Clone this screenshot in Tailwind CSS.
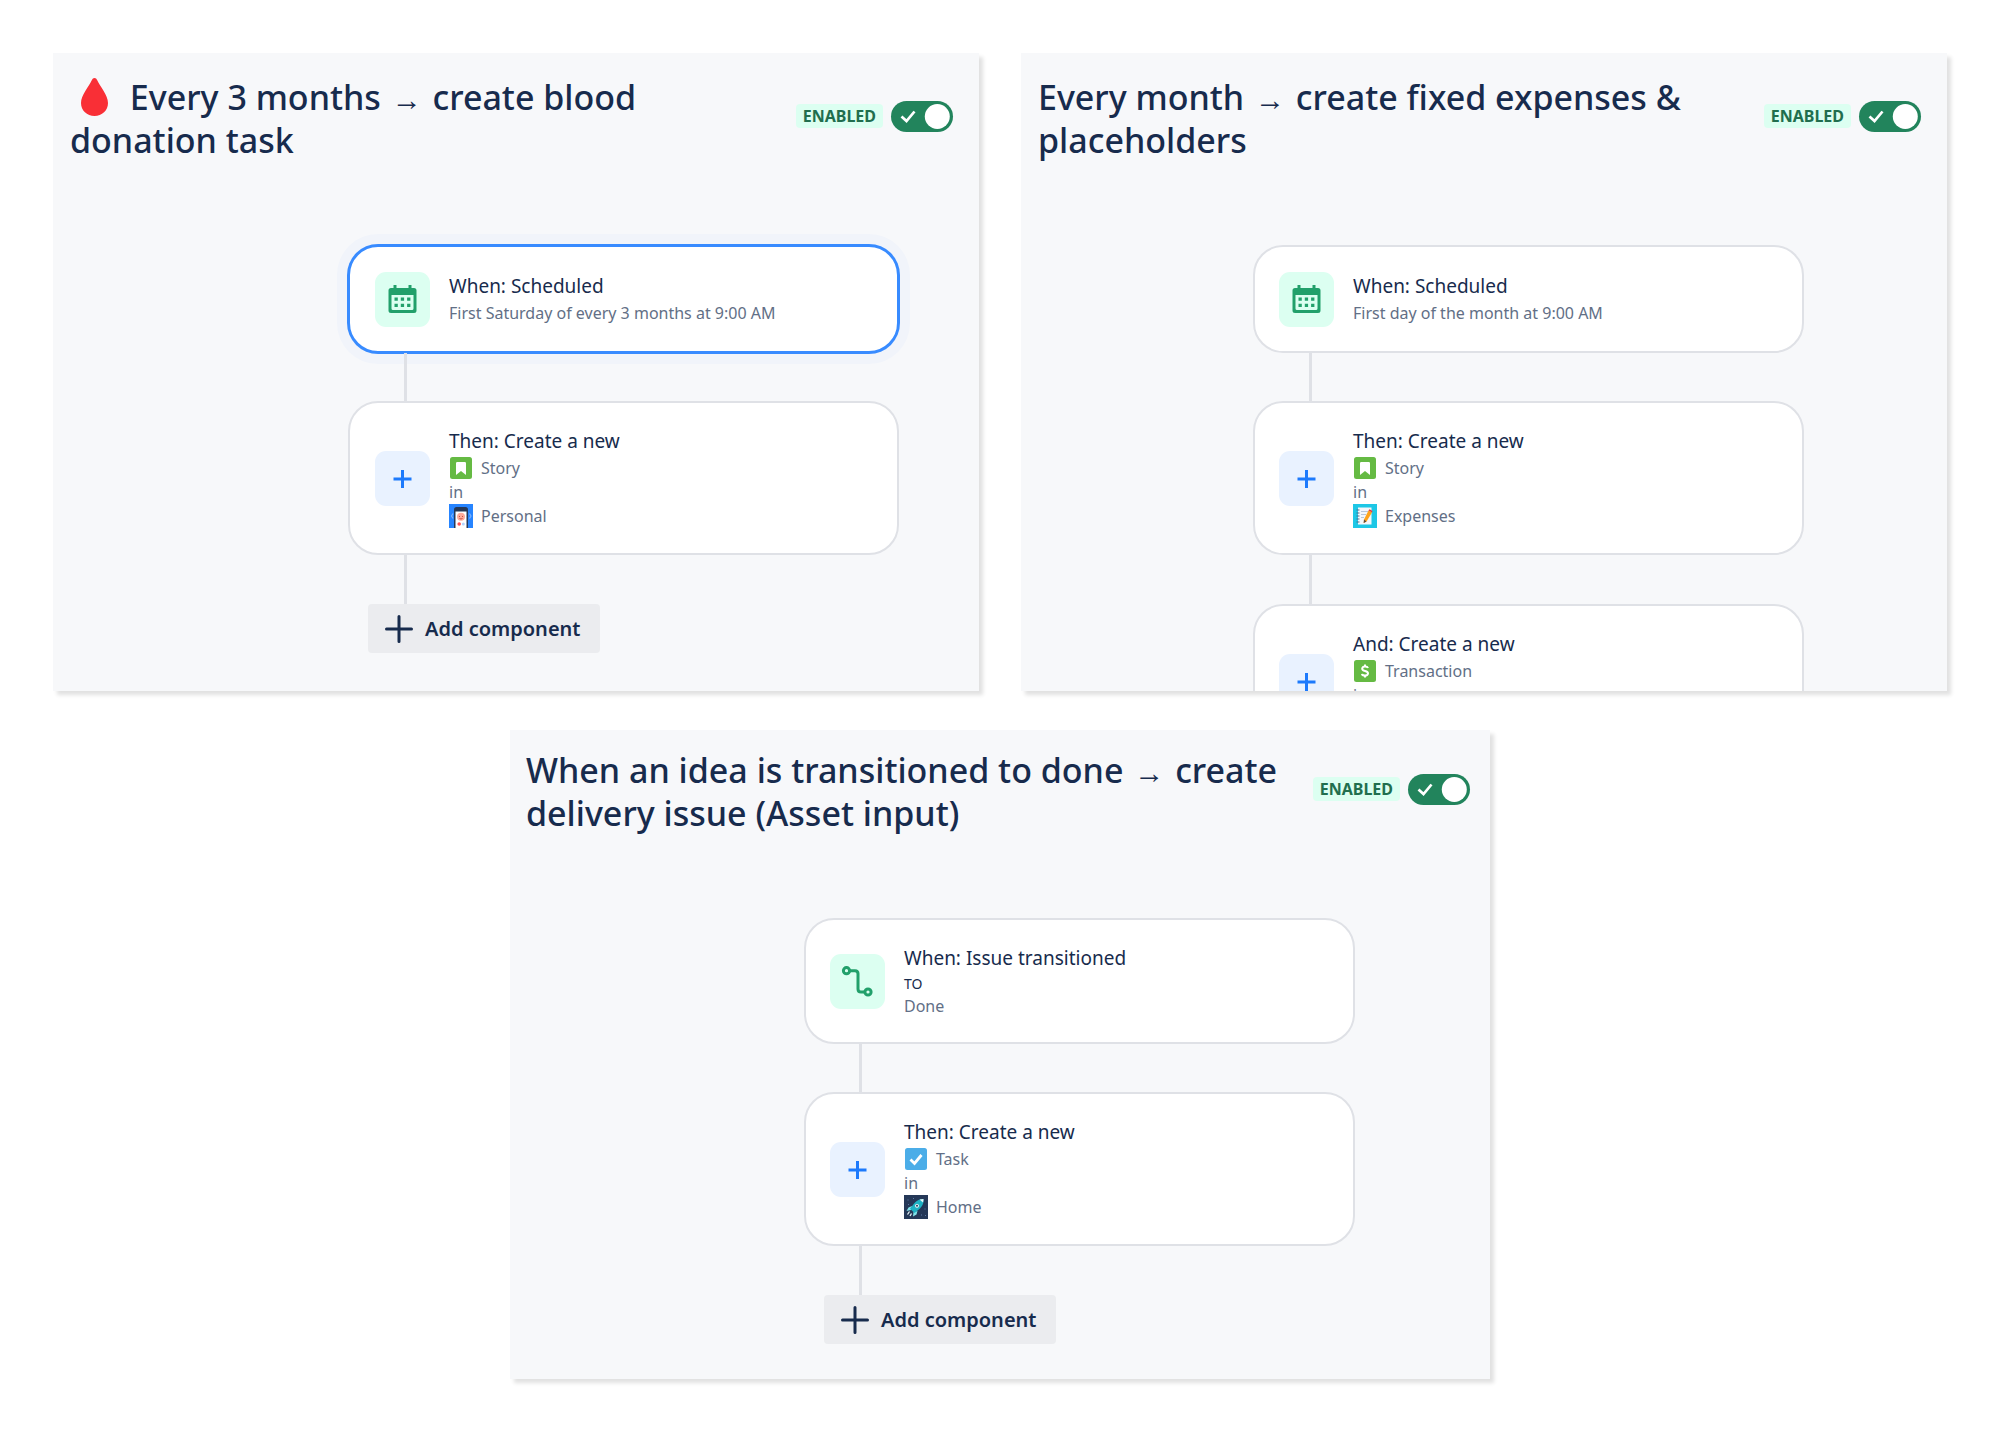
<!DOCTYPE html>
<html lang="en">

<head>
    <meta charset="utf-8" />
    <meta name="viewport" content="width=device-width, initial-scale=1" />
    <script src="https://cdn.jsdelivr.net/npm/@tailwindcss/browser@4"></script>
    <title>Automation rules</title>
</head>

<body class="bg-white font-['Noto_Sans','Open_Sans',sans-serif] text-[#172b4d]">
    <!-- Shared icons -->
    <svg class="hidden" aria-hidden="true">
        <symbol id="toggle" viewBox="0 0 62 31">
            <path d="M10.5 15.5l5 4.5 8-9.5" fill="none" stroke="#fff" stroke-width="2.7" />
            <circle cx="46.3" cy="15.5" r="12.5" fill="#fff" />
        </symbol>
        <symbol id="calendar" viewBox="0 0 55 55">
            <path fill="#22a06b" fill-rule="evenodd"
                d="M18.500 13h3v3h12v-3h3v3h2.500a2.500 2.500 0 0 1 2.500 2.500V38.500a2.500 2.500 0 0 1-2.500 2.500H16a2.500 2.500 0 0 1-2.500-2.500V18.500A2.500 2.500 0 0 1 16 16h2.500zM16.500 23v13.500a1.500 1.500 0 0 0 1.500 1.500h19a1.500 1.500 0 0 0 1.500-1.500V23z" />
            <path fill="#22a06b"
                d="M19.500 25.500h3.300v3.300h-3.300zM25.800 25.500h3.300v3.300h-3.300zM32.100 25.500h3.300v3.300h-3.300zM19.500 31.700h3.300v3.300h-3.300zM25.800 31.700h3.300v3.300h-3.300zM32.100 31.700h3.300v3.300h-3.300z" />
        </symbol>
        <symbol id="route" viewBox="0 0 55 55">
            <g fill="none" stroke="#22a06b" stroke-width="3">
                <circle cx="16.500" cy="16.700" r="3.100" />
                <circle cx="38" cy="38" r="3.100" />
                <path d="M19.600 16.700H25q3 0 3 3V35q0 3 3 3h4" />
            </g>
        </symbol>
        <symbol id="plus" viewBox="0 0 55 55">
            <path d="M27.500 19v18M18.500 28h18" stroke="#1d7afc" stroke-width="3" />
        </symbol>
        <symbol id="add" viewBox="0 0 28 28">
            <path d="M14 1.500v25M1.500 14h25" stroke="#172b4d" stroke-width="3" stroke-linecap="round" />
        </symbol>
        <symbol id="story" viewBox="0 0 22 22">
            <rect width="22" height="22" rx="2.500" fill="#65ba43" />
            <path d="M6 6.200q0-1.200 1.200-1.200h7.600q1.200 0 1.200 1.200V18l-5-4-5 4z" fill="#fff" />
        </symbol>
        <symbol id="transaction" viewBox="0 0 22 22">
            <rect width="22" height="22" rx="2.500" fill="#65ba43" />
            <path d="M14 8Q13.500 6.500 11 6.500T8.200 8.700C8.200 11.700 14 10.300 14 13.300Q13.800 15.500 11 15.500T8 13.800M11 4.500v2M11 15.500v2"
                fill="none" stroke="#fff" stroke-width="2" />
        </symbol>
        <symbol id="task" viewBox="0 0 22 22">
            <rect width="22" height="22" rx="2.500" fill="#4bade8" />
            <path d="M5.500 11.500l4 4 7-8.500" fill="none" stroke="#fff" stroke-width="2.800" />
        </symbol>
        <symbol id="personal" viewBox="0 0 24 24">
            <path fill="#2684ff" d="M0 0h24v24H0z" />
            <path d="M4 9.500L2.500 12 4 14.500M20.500 9.500L22 12l-1.500 2.500" fill="none" stroke="#7ab2ff" stroke-width="1.200" />
            <path d="M5 24V5.500Q5 3 7.500 3h9Q19 3 19 5.500V24z" fill="#253858" />
            <path d="M6.500 7.500h11V24h-11z" fill="#fff" />
            <circle cx="12" cy="12.700" r="4" fill="#ffab9a" />
            <path d="M10 12.500h1M13 12.500h1M10.500 14.500q1.500 1 3 0" fill="none" stroke="#c0453a" stroke-width=".9" />
            <circle cx="10.200" cy="20" r="1.800" fill="#ff5050" />
            <circle cx="14.300" cy="20" r="1.500" fill="#b3d4ff" />
        </symbol>
        <symbol id="expenses" viewBox="0 0 24 24">
            <path fill="#1dc7e6" d="M0 0h24v24H0z" />
            <path fill="#f4f7fb" d="M5 3.500h13.500v17H5z" />
            <path d="M3.500 6h3M3.500 9h3M3.500 12h3M3.500 15h3M3.500 18h3" stroke="#4b6a8c" stroke-width="1.200" />
            <path d="M8 7.500h7M8 10.500h5M8 13.500h3" stroke="#b9c6d6" />
            <path d="M15.500 6.500l3.500 2-5.500 9-2.800 1.500.3-3.500z" fill="#ffa31a" />
            <path d="M15.500 6.500l1-1.200 3 1.700-.5 1.500z" fill="#e5393f" />
            <path d="M11 15.500l-.3 3.500 2.800-1.500z" fill="#5b4a3f" />
        </symbol>
        <symbol id="home" viewBox="0 0 24 24">
            <path fill="#253858" d="M0 0h24v24H0z" />
            <path d="M3.500 5h1M9 3.500h1M20.500 14h1M17 20h1M4 9.500h1M21 20.500h1" stroke="#5e7aa6" />
            <path d="M8 11l-3.500 1.500L2.500 16 7 15zM13.500 16l-1 3.500L9 21.500l.5-4.500z" fill="#7fe3ea" />
            <path d="M19.500 4q.5 5.500-3.500 9.500l-5.500 4.500-4.500-4.200L10.500 8q3.500-4 9-4z" fill="#1fb2c4" />
            <path d="M19.500 4q0 1.500-.5 3.500L15.500 4.600Q17.500 4 19.500 4z" fill="#e9f7fa" />
            <circle cx="13" cy="10.800" r="1.900" fill="#fff" />
            <circle cx="13" cy="10.800" r="1" fill="#253858" />
            <path d="M5.500 16.500l-2 3M7.500 18.500L6 21" stroke="#e9f7fa" stroke-width="1.300" />
        </symbol>
    </svg>

    <main class="px-[53px] py-[53px]">
        <div class="grid grid-cols-2 gap-x-[42px]">

            <!-- Blood donation rule -->
            <section class="bg-[#f7f8fa] pb-9 shadow-[4px_4px_4px_rgba(0,0,0,0.12)]">
                <header class="flex items-center justify-between pt-[23px] pl-[17px] pr-[26px]">
                    <h2 class="text-[34px] leading-[43px] font-medium">
                        <svg class="inline-block w-[27px] h-[38px] ml-[11px] mr-[13px] align-[-6px]" viewBox="0 0 27 38" aria-hidden="true">
                            <path d="M13.500 0c1.300 0 2 .8 2.600 2C19 8.500 27 17 27 25c0 7.500-6 13-13.500 13S0 32.500 0 25C0 17 8 8.500 10.900 2c.6-1.200 1.300-2 2.600-2z" fill="#f92f36" />
                        </svg>
                        Every 3 months <span class="mx-[2px] font-['Liberation_Sans'] text-[30px] leading-none font-bold">→</span> create blood<br>donation task
                    </h2>
                    <label class="flex items-center gap-2 mb-[6px]">
                        <span class="rounded bg-[#dcfff1] px-[7px] text-base leading-6 font-bold text-[#216e4e]">ENABLED</span>
                        <span class="relative block w-[62px] h-[31px]">
                            <input type="checkbox" checked class="absolute inset-0 size-full appearance-none rounded-full bg-gray-400 checked:bg-[#22845c]" />
                            <svg class="relative w-[62px] h-[31px] pointer-events-none"><use href="#toggle" /></svg>
                        </span>
                    </label>
                </header>

                <div class="mt-[83px] pl-[295px] pr-20">
                    <div class="flex items-center gap-[19px] rounded-[30px] border-2 border-[#388bff] bg-white py-[26px] px-[25px] shadow-[0_0_0_1px_#388bff,0_0_0_11px_rgba(56,139,255,0.03)]">
                        <svg class="size-[55px] -my-4 shrink-0 rounded-[11px] bg-[#dcfff1]"><use href="#calendar" /></svg>
                        <div>
                            <h3 class="mb-[2px] text-[19px] leading-[26px]">When: Scheduled</h3>
                            <p class="text-base leading-6 text-[#626f86]">First Saturday of every 3 months at 9:00 AM</p>
                        </div>
                    </div>
                    <div class="ml-14 h-12 w-[3px] bg-[#dfe1e6]"></div>
                    <div class="flex items-center gap-[19px] rounded-[30px] border-2 border-[#dfe1e6] bg-white py-[25px] px-[25px]">
                        <svg class="size-[55px] shrink-0 rounded-[11px] bg-[#e9f2ff]"><use href="#plus" /></svg>
                        <div class="text-base leading-6 text-[#626f86]">
                            <h3 class="mb-[2px] text-[19px] leading-[26px] text-[#172b4d]">Then: Create a new</h3>
                            <p class="flex items-center gap-2"><span class="flex w-6 justify-center"><svg class="size-[22px]"><use href="#story" /></svg></span>Story</p>
                            <p>in</p>
                            <p class="flex items-center gap-2"><svg class="size-6"><use href="#personal" /></svg>Personal</p>
                        </div>
                    </div>
                    <div class="ml-14 h-[49px] w-[3px] bg-[#dfe1e6]"></div>
                    <button type="button" class="ml-5 flex h-[49px] items-center gap-3 rounded bg-[#ebecef] pl-[17px] pr-5 text-xl font-semibold">
                        <svg class="size-7"><use href="#add" /></svg>
                        Add component
                    </button>
                </div>
            </section>

            <!-- Fixed expenses rule -->
            <section class="h-[638px] overflow-hidden bg-[#f7f8fa] shadow-[4px_4px_4px_rgba(0,0,0,0.12)]">
                <header class="flex items-center justify-between pt-[23px] pl-[17px] pr-[26px]">
                    <h2 class="text-[34px] leading-[43px] font-medium">Every month <span class="mx-[2px] font-['Liberation_Sans'] text-[30px] leading-none font-bold">→</span> create fixed expenses &amp;<br>placeholders</h2>
                    <label class="flex items-center gap-2 mb-[6px]">
                        <span class="rounded bg-[#dcfff1] px-[7px] text-base leading-6 font-bold text-[#216e4e]">ENABLED</span>
                        <span class="relative block w-[62px] h-[31px]">
                            <input type="checkbox" checked class="absolute inset-0 size-full appearance-none rounded-full bg-gray-400 checked:bg-[#22845c]" />
                            <svg class="relative w-[62px] h-[31px] pointer-events-none"><use href="#toggle" /></svg>
                        </span>
                    </label>
                </header>

                <div class="mt-[83px] pl-[232px] pr-[143px]">
                    <div class="flex items-center gap-[19px] rounded-[30px] border-2 border-[#dfe1e6] bg-white py-[26px] px-6">
                        <svg class="size-[55px] -my-4 shrink-0 rounded-[11px] bg-[#dcfff1]"><use href="#calendar" /></svg>
                        <div>
                            <h3 class="mb-[2px] text-[19px] leading-[26px]">When: Scheduled</h3>
                            <p class="text-base leading-6 text-[#626f86]">First day of the month at 9:00 AM</p>
                        </div>
                    </div>
                    <div class="ml-14 h-12 w-[3px] bg-[#dfe1e6]"></div>
                    <div class="flex items-center gap-[19px] rounded-[30px] border-2 border-[#dfe1e6] bg-white py-[25px] px-6">
                        <svg class="size-[55px] shrink-0 rounded-[11px] bg-[#e9f2ff]"><use href="#plus" /></svg>
                        <div class="text-base leading-6 text-[#626f86]">
                            <h3 class="mb-[2px] text-[19px] leading-[26px] text-[#172b4d]">Then: Create a new</h3>
                            <p class="flex items-center gap-2"><span class="flex w-6 justify-center"><svg class="size-[22px]"><use href="#story" /></svg></span>Story</p>
                            <p>in</p>
                            <p class="flex items-center gap-2"><svg class="size-6"><use href="#expenses" /></svg>Expenses</p>
                        </div>
                    </div>
                    <div class="ml-14 h-[49px] w-[3px] bg-[#dfe1e6]"></div>
                    <div class="flex items-center gap-[19px] rounded-[30px] border-2 border-[#dfe1e6] bg-white py-[25px] px-6">
                        <svg class="size-[55px] shrink-0 rounded-[11px] bg-[#e9f2ff]"><use href="#plus" /></svg>
                        <div class="text-base leading-6 text-[#626f86]">
                            <h3 class="mb-[2px] text-[19px] leading-[26px] text-[#172b4d]">And: Create a new</h3>
                            <p class="flex items-center gap-2"><span class="flex w-6 justify-center"><svg class="size-[22px]"><use href="#transaction" /></svg></span>Transaction</p>
                            <p>in</p>
                            <p class="flex items-center gap-2"><svg class="size-6"><use href="#expenses" /></svg>Expenses</p>
                        </div>
                    </div>
                </div>
            </section>
        </div>

        <!-- Delivery issue rule -->
        <section class="mx-auto mt-[39px] max-w-[980px] bg-[#f7f8fa] pb-[35px] shadow-[4px_4px_4px_rgba(0,0,0,0.12)]">
            <header class="flex items-center justify-between pt-[19px] pl-4 pr-5">
                <h2 class="text-[34px] leading-[43px] font-medium">When an idea is transitioned to done <span class="mx-[2px] font-['Liberation_Sans'] text-[30px] leading-none font-bold">→</span> create<br>delivery issue (Asset input)</h2>
                <label class="flex items-center gap-2 mb-[6px]">
                    <span class="rounded bg-[#dcfff1] px-[7px] text-base leading-6 font-bold text-[#216e4e]">ENABLED</span>
                    <span class="relative block w-[62px] h-[31px]">
                        <input type="checkbox" checked class="absolute inset-0 size-full appearance-none rounded-full bg-gray-400 checked:bg-[#22845c]" />
                        <svg class="relative w-[62px] h-[31px] pointer-events-none"><use href="#toggle" /></svg>
                    </span>
                </label>
            </header>

            <div class="mt-[83px] pl-[294px] pr-[135px]">
                <div class="flex items-center gap-[19px] rounded-[30px] border-2 border-[#dfe1e6] bg-white py-[25px] px-6">
                    <svg class="size-[55px] shrink-0 rounded-[11px] bg-[#dcfff1]"><use href="#route" /></svg>
                    <div>
                        <h3 class="mb-[2px] text-[19px] leading-[26px]">When: Issue transitioned</h3>
                        <p class="text-sm leading-[22px]">TO</p>
                        <p class="text-base leading-[22px] text-[#626f86]">Done</p>
                    </div>
                </div>
                <div class="ml-[55px] h-12 w-[3px] bg-[#dfe1e6]"></div>
                <div class="flex items-center gap-[19px] rounded-[30px] border-2 border-[#dfe1e6] bg-white py-[25px] px-6">
                    <svg class="size-[55px] shrink-0 rounded-[11px] bg-[#e9f2ff]"><use href="#plus" /></svg>
                    <div class="text-base leading-6 text-[#626f86]">
                        <h3 class="mb-[2px] text-[19px] leading-[26px] text-[#172b4d]">Then: Create a new</h3>
                        <p class="flex items-center gap-2"><span class="flex w-6 justify-center"><svg class="size-[22px]"><use href="#task" /></svg></span>Task</p>
                        <p>in</p>
                        <p class="flex items-center gap-2"><svg class="size-6"><use href="#home" /></svg>Home</p>
                    </div>
                </div>
                <div class="ml-[55px] h-[49px] w-[3px] bg-[#dfe1e6]"></div>
                <button type="button" class="ml-5 flex h-[49px] items-center gap-3 rounded bg-[#ebecef] pl-[17px] pr-5 text-xl font-semibold">
                    <svg class="size-7"><use href="#add" /></svg>
                    Add component
                </button>
            </div>
        </section>
    </main>
</body>

</html>
